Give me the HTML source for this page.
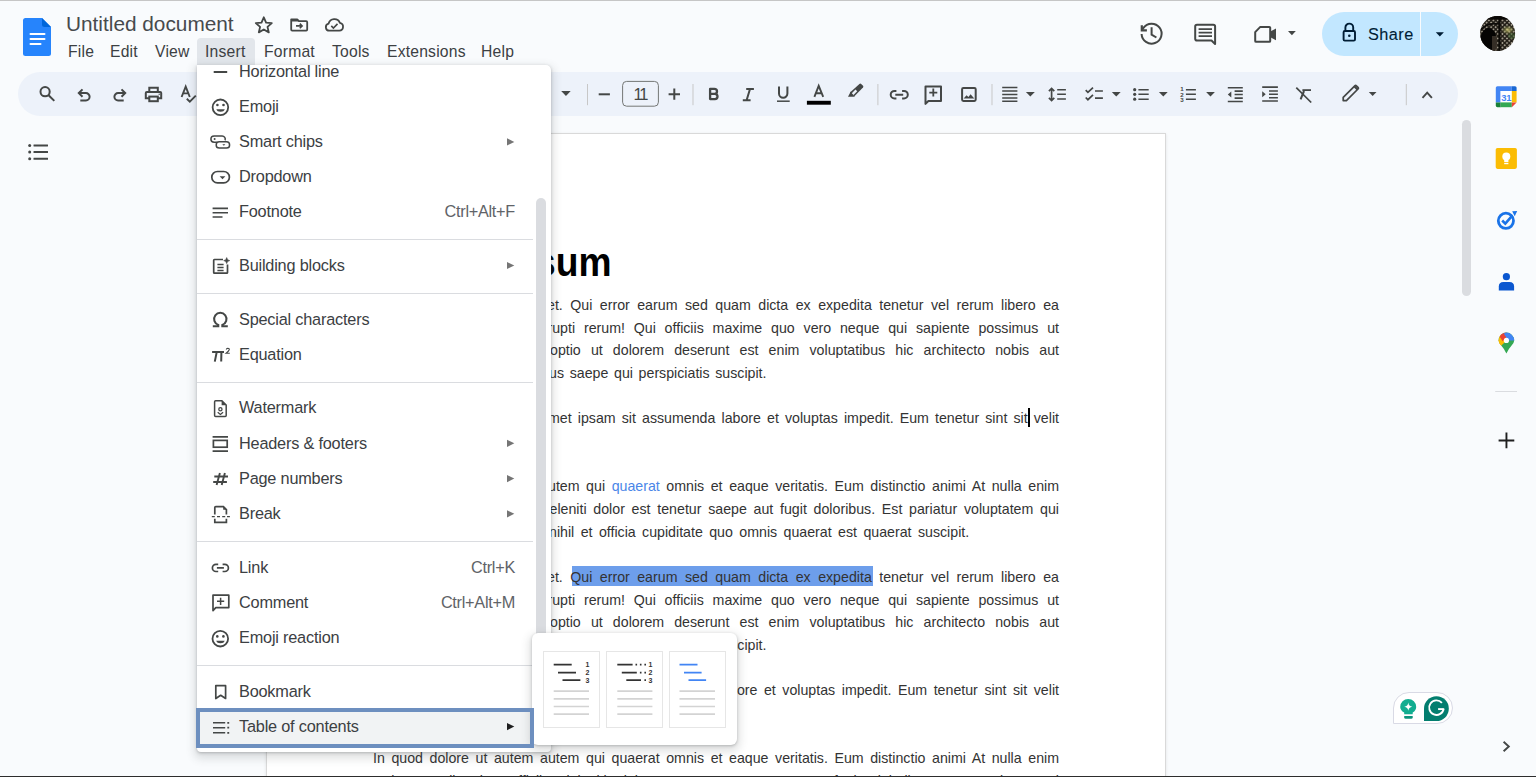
<!DOCTYPE html>
<html><head><meta charset="utf-8">
<style>
*{box-sizing:border-box;margin:0;padding:0}
html,body{width:1536px;height:777px;overflow:hidden;background:#f9fbfd;font-family:"Liberation Sans",sans-serif;position:relative}
.a{position:absolute}
.t{position:absolute;white-space:nowrap;line-height:1}
svg{position:absolute;overflow:visible}
.mb{font-size:15.7px;letter-spacing:.2px;color:#3c4043}
.doc{position:absolute;white-space:nowrap;font-size:14.2px;line-height:1;color:#333;text-align:justify;text-align-last:justify}
.mi{position:absolute;left:239px;font-size:16.3px;color:#3c4043;white-space:nowrap;line-height:1;letter-spacing:-0.2px}
.sc{position:absolute;right:1021px;font-size:16.3px;letter-spacing:-0.28px;color:#5f6368;white-space:nowrap;line-height:1;text-align:right}
</style></head><body>
<div class="a" style="left:0;top:0;width:1536px;height:1px;background:#c6c6c6"></div>
<svg style="left:23px;top:18px" width="28" height="38" viewBox="0 0 28 38">
<path d="M2.5 0H19L28 9V35.5Q28 38 25.5 38H2.5Q0 38 0 35.5V2.5Q0 0 2.5 0Z" fill="#2684fc"/>
<path d="M19 0L28 9H21.5Q19 9 19 6.5Z" fill="#0066da"/>
<rect x="6.5" y="15" width="16" height="2" rx="1" fill="#fff"/>
<rect x="6.5" y="20" width="16" height="2" rx="1" fill="#fff"/>
<rect x="6.5" y="25" width="12" height="2" rx="1" fill="#fff"/>
</svg>
<div class="t" style="left:66px;top:13.9px;font-size:20.8px;color:#474a4d">Untitled document</div>
<svg style="left:0;top:0" width="1536" height="70" fill="none" stroke="#444746" stroke-width="1.8">
<!-- star -->
<path d="M263.8 17.3L266.1 22.6L271.8 23.1L267.5 26.9L268.8 32.4L263.8 29.5L258.8 32.4L260.1 26.9L255.8 23.1L261.5 22.6Z" stroke-linejoin="round"/>
<!-- folder -->
<path d="M291.2 19.3H297.2L299 21.2H306.2Q307.2 21.2 307.2 22.2V29.6Q307.2 30.6 306.2 30.6H292.2Q291.2 30.6 291.2 29.6Z" stroke-linejoin="round"/>
<path d="M296 25.9H302M299.8 23.6L302.1 25.9L299.8 28.2" stroke-width="1.6"/>
<path d="M291.2 19.3H297.2L299.2 21.6H291.2Z" fill="#444746" stroke="none"/>
<!-- cloud -->
<path d="M329.5 30.7H339.3A4 4 0 0 0 339.9 22.8A6 6 0 0 0 328.6 23.6A3.6 3.6 0 0 0 329.5 30.7Z" stroke-linejoin="round"/>
<path d="M331.3 25.9L333.4 28L337.5 23.9" stroke-width="1.6"/>
</svg>
<div class="a" style="left:197px;top:38px;width:58px;height:27px;background:#e2e6eb;border-radius:4px 4px 0 0"></div>
<div class="t mb" style="left:68px;top:44px">File</div>
<div class="t mb" style="left:110px;top:44px">Edit</div>
<div class="t mb" style="left:155px;top:44px">View</div>
<div class="t mb" style="left:205px;top:44px">Insert</div>
<div class="t mb" style="left:264px;top:44px">Format</div>
<div class="t mb" style="left:332px;top:44px">Tools</div>
<div class="t mb" style="left:387px;top:44px">Extensions</div>
<div class="t mb" style="left:481px;top:44px">Help</div>

<!-- right header icons -->
<svg style="left:0;top:0" width="1536" height="70" fill="none" stroke="#444746" stroke-width="2">
<!-- history -->
<path d="M1141.6 34A10 10 0 1 0 1143.4 27.9L1142.4 29.6"/>
<path d="M1141.8 25.2V30.3H1146.9" stroke-width="2.2" stroke-linejoin="miter"/>
<path d="M1151.6 27.3V34.6L1156.4 37.5"/>
<!-- comments -->
<path d="M1197 24.8H1213.3Q1215.1 24.8 1215.1 26.6V44.1L1211.5 40.5H1197Q1195.2 40.5 1195.2 38.7V26.6Q1195.2 24.8 1197 24.8Z" stroke-linejoin="round"/>
<path d="M1198.6 29.1H1212M1198.6 32.6H1212M1198.6 36.1H1212" stroke-width="1.9"/>
<!-- meet -->
<path d="M1260.3 26.9H1269.3Q1270.2 26.9 1270.2 27.8V40.9Q1270.2 41.8 1269.3 41.8H1256.1Q1255.2 41.8 1255.2 40.9V32.1Z" stroke-linejoin="round"/>
<path d="M1270.3 31.6L1276 28.6V40.3L1270.3 37.2Z" fill="#444746" stroke="none"/>
<path d="M1288 31.1H1295.8L1291.9 35.2Z" fill="#444746" stroke="none"/>
</svg>
<div class="a" style="left:1321.5px;top:12px;width:136px;height:44px;background:#c2e7ff;border-radius:22px"></div>
<div class="a" style="left:1420px;top:12px;width:1px;height:44px;background:#f9fbfd"></div>
<svg style="left:0;top:0" width="1536" height="70" fill="none" stroke="#001d35" stroke-width="1.9">
<path d="M1345.4 30.6V27.5A3.9 3.9 0 0 1 1353.2 27.5V30.6"/>
<rect x="1343.6" y="31" width="11.4" height="9.6" rx="1.2"/>
<circle cx="1349.3" cy="35.8" r="1.3" fill="#001d35" stroke="none"/>
<path d="M1435.8 32.2H1443.9L1439.85 36.6Z" fill="#001d35" stroke="none"/>
</svg>
<div class="t" style="left:1368px;top:26.1px;font-size:16.3px;letter-spacing:.45px;color:#001d35;-webkit-text-stroke:.1px #001d35">Share</div>
<!-- avatar -->
<svg style="left:0;top:0" width="1536" height="70">
<defs>
<clipPath id="avc"><circle cx="1497.6" cy="33.5" r="17.5"/></clipPath>
<pattern id="mesh" x="0" y="0" width="3.2" height="3.2" patternUnits="userSpaceOnUse" patternTransform="rotate(45)">
<rect width="3.2" height="3.2" fill="#1e1a14"/>
<circle cx="1.6" cy="1.6" r="1" fill="#bdb6a6"/>
</pattern>
<radialGradient id="glow" cx="0.5" cy="0.5" r="0.5"><stop offset="0" stop-color="#d8d07a" stop-opacity=".85"/><stop offset="1" stop-color="#6f7a3a" stop-opacity="0"/></radialGradient>
</defs>
<g clip-path="url(#avc)">
<rect x="1480" y="16" width="36" height="36" fill="url(#mesh)"/>
<rect x="1480" y="16" width="36" height="36" fill="#2a2418" opacity=".2"/>
<ellipse cx="1508" cy="30" rx="7" ry="5" fill="url(#glow)"/>
<ellipse cx="1512" cy="36" rx="4" ry="3" fill="#3d5a30" opacity=".6"/>
<path d="M1480 30Q1488 22 1499 24" stroke="#0d0b08" stroke-width="1.6" fill="none"/>
<ellipse cx="1488.5" cy="42" rx="8.5" ry="14" fill="#050403"/>
<rect x="1492" y="36" width="5" height="16" fill="#4a4036" opacity=".7"/>
<rect x="1498.4" y="16" width="2.2" height="36" fill="#0c0a07"/>
<rect x="1480" y="16" width="36" height="3.5" fill="#0a0806"/>
</g>
</svg>
<div class="a" style="left:18px;top:72px;width:1439.5px;height:44px;background:#edf2fa;border-radius:22px"></div>
<svg style="left:0;top:0" width="1536" height="130" fill="none" stroke="#444746" stroke-width="2">
<!-- search -->
<circle cx="45.1" cy="91.7" r="4.6"/>
<path d="M48.6 95.2L54.3 100.9"/>
<!-- undo -->
<path d="M80.3 100.5H85.9A3.7 3.7 0 0 0 85.9 93.1H79"/>
<path d="M82.5 89.4L78.8 93.1L82.5 96.8"/>
<!-- redo -->
<path d="M123.7 100.5H118.1A3.7 3.7 0 0 1 118.1 93.1H125"/>
<path d="M121.5 89.4L125.2 93.1L121.5 96.8"/>
<!-- print -->
<path d="M149.3 91V87.8H157.8V91"/>
<path d="M149.3 98.2H145.8V93Q145.8 91.9 146.9 91.9H160.1Q161.2 91.9 161.2 93V98.2H157.8"/>
<rect x="149.3" y="96.6" width="8.5" height="4.6"/>
<circle cx="159.2" cy="94.2" r="0.7" fill="#444746" stroke="none"/>
<!-- spellcheck -->
<path d="M181.6 97L185.7 86.6L189.8 97M183 93.4H188.4" stroke-width="1.9"/>
<path d="M186.8 98.8L189.8 101.6L195.8 95.6" stroke-width="1.9"/>
<!-- dropdown arrow (font) -->
<path d="M561.2 91H570.7L565.95 95.9Z" fill="#444746" stroke="none"/>
<!-- separators -->
<path d="M587.5 84V105.2M693 84V105.2M877.9 84V105.2M992 84V105.2M1406.3 84V105.2" stroke="#c7c7c7" stroke-width="1"/>
<!-- minus -->
<path d="M598.7 94.3H609.9"/>
<!-- font size box -->
<rect x="622.6" y="81.4" width="35.8" height="24.8" rx="4" stroke="#747775" stroke-width="1"/>
<!-- plus -->
<path d="M668.6 94.2H680M674.3 88.6V99.8"/>
<!-- bold -->
<path d="M710.1 88.9H714.3Q717 88.9 717 91.5Q717 93.9 714.3 93.9H710.1ZM710.1 93.9H714.9Q717.5 93.9 717.5 96.6Q717.5 99.1 714.9 99.1H710.1Z" stroke-width="2.3" stroke-linejoin="round"/>
<!-- italic -->
<path d="M746.2 89H753.9M742.8 100.2H750.6M750 89L746.6 100.2"/>
<!-- underline -->
<path d="M779 86.5V93.6A4.2 4.2 0 0 0 787.4 93.6V86.5"/>
<path d="M777 101.2H789.7" stroke-width="1.5"/>
<!-- text color A -->
<path d="M814.4 96.9L818.7 85.9L823.2 96.9M815.9 93.3H821.6" stroke-width="1.9"/>
<rect x="806.9" y="100.8" width="23.9" height="3.9" fill="#000" stroke="none"/>
<!-- highlighter -->
<path d="M850 92.4L859.4 83.9Q860.3 83.1 861.2 83.9L863 85.7Q863.8 86.6 863 87.5L854.4 96.2Z" fill="#444746" stroke="none"/>
<path d="M850.8 91.6L848 96.8H854.8Z" fill="#444746" stroke="none"/>
<path d="M857.19 91.21L855.49 89.51L851.81 93.19L853.51 94.89Z" fill="#edf2fa" stroke="none"/>
<!-- link -->
<path d="M896.4 90.9H894.5A3.8 3.8 0 0 0 894.5 98.5H896.4M902.1 90.9H904A3.8 3.8 0 0 1 904 98.5H902.1M895.3 94.7H903.2"/>
<!-- add comment -->
<path d="M925.5 86.6H941V101H928.4L925.5 103.9Z" stroke-linejoin="round"/>
<path d="M929.3 92.6H937.3M933.3 88.6V96.6" stroke-width="1.8"/>
<!-- image -->
<rect x="962.1" y="88" width="13.6" height="12.9" rx="1.3"/>
<path d="M963.6 98.6L966.6 95.3L968.4 97.1L970.6 94.2L974.3 98.6Z" fill="#444746" stroke="none"/>
<!-- justify -->
<path d="M1002.2 87.5H1017.4M1002.2 91H1017.4M1002.2 94.4H1017.4M1002.2 97.9H1017.4M1002.2 101.3H1017.4" stroke-width="1.5"/>
<path d="M1025.9 92H1034.8L1030.35 96.6Z" fill="#444746" stroke="none"/>
<!-- line spacing -->
<path d="M1051.6 89.5V99.5M1048.9 91.2L1051.6 88.5L1054.3 91.2M1048.9 97.8L1051.6 100.5L1054.3 97.8" stroke-width="1.7"/>
<path d="M1057.2 89.7H1065.9M1057.2 94.3H1065.9M1057.2 99H1065.9" stroke-width="1.6"/>
<!-- checklist -->
<path d="M1085.7 90.2L1087.9 92.4L1093 87.6M1085.7 97.5L1087.9 99.7L1093 94.9" stroke-width="1.7"/>
<path d="M1095 91H1102.9M1095 98.1H1102.9" stroke-width="1.6"/>
<path d="M1111.8 92H1120.7L1116.25 96.6Z" fill="#444746" stroke="none"/>
<!-- bullets -->
<circle cx="1134.7" cy="89.7" r="1.6" fill="#444746" stroke="none"/>
<circle cx="1134.7" cy="94.3" r="1.6" fill="#444746" stroke="none"/>
<circle cx="1134.7" cy="99.2" r="1.6" fill="#444746" stroke="none"/>
<path d="M1138.4 89.7H1148.7M1138.4 94.3H1148.7M1138.4 99.2H1148.7" stroke-width="1.6"/>
<path d="M1158.9 92H1167.7L1163.3 96.6Z" fill="#444746" stroke="none"/>
<!-- numbered -->
<g fill="#444746" stroke="none" font-family="Liberation Sans" font-weight="bold" font-size="6.2"><text x="1180.3" y="91.4">1</text><text x="1180.3" y="96.7">2</text><text x="1180.3" y="102">3</text></g>
<path d="M1185.9 89.7H1195.9M1185.9 94.3H1195.9M1185.9 99.2H1195.9" stroke-width="1.6"/>
<path d="M1206.1 92H1214.9L1210.5 96.6Z" fill="#444746" stroke="none"/>
<!-- outdent -->
<path d="M1227.8 87.7H1242.8M1234.6 91.1H1242.8M1234.6 94.5H1242.8M1234.6 98.1H1242.8M1227.8 101.5H1242.8" stroke-width="1.6"/>
<path d="M1231.3 91.6V97.4L1227.8 94.5Z" fill="#444746" stroke="none"/>
<!-- indent -->
<path d="M1262.2 87.1H1277.9M1269 91H1277.9M1269 94.3H1277.9M1269 97.8H1277.9M1262.2 101H1277.9" stroke-width="1.6"/>
<path d="M1262.2 91.2V97.2L1265.7 94.2Z" fill="#444746" stroke="none"/>
<!-- clear formatting -->
<path d="M1302.4 90.1H1311" stroke-width="1.8"/>
<path d="M1304 91L1300.6 99.4" stroke-width="2"/>
<path d="M1296.3 87.7L1311.2 102.5" stroke-width="1.7"/>
<!-- pencil -->
<path d="M1343.2 100.6V97.4L1354.8 85.8Q1355.6 85 1356.4 85.8L1358 87.4Q1358.8 88.2 1358 89L1346.4 100.6Z" stroke-width="1.7" stroke-linejoin="round"/>
<path d="M1354.3 86.3L1357.5 89.5" stroke-width="2.2"/>
<path d="M1368.8 92H1376.5L1372.65 96Z" fill="#444746" stroke="none"/>
<!-- caret up -->
<path d="M1422.5 97.8L1427.2 92.6L1431.9 97.8" stroke-width="1.9"/>
</svg>
<div class="t" style="left:633.6px;top:85.6px;font-size:16.5px;letter-spacing:-2.4px;color:#444746">11</div>
<div class="a" style="left:266px;top:133px;width:900px;height:700px;background:#fff;border:1px solid #d9d9d9;box-shadow:0 1px 3px rgba(0,0,0,.1)"></div>
<div class="t" style="left:300px;top:242px;width:311.6px;text-align:right;font-size:40px;font-weight:bold;color:#000;transform:scaleX(0.93);transform-origin:right top">Lorem ipsum</div>
<div class="a" style="left:571.6px;top:566.2px;width:301.6px;height:19.4px;background:#6d9eeb"></div>
<div class="doc" style="left:547px;top:298.08px;width:512px">et. Qui error earum sed quam dicta ex expedita tenetur vel rerum libero ea</div>
<div class="doc" style="left:547.5px;top:320.73px;width:511.5px">rupti rerum! Qui officiis maxime quo vero neque qui sapiente possimus ut</div>
<div class="doc" style="left:550px;top:343.38px;width:509px">optio ut dolorem deserunt est enim voluptatibus hic architecto nobis aut</div>
<div class="doc" style="left:549px;top:366.03px;width:217.5px">us saepe qui perspiciatis suscipit.</div>
<div class="doc" style="left:548px;top:411.33px;width:511px">met ipsam sit assumenda labore et voluptas impedit. Eum tenetur sint sit velit</div>
<div class="doc" style="left:548px;top:479.28px;width:511px">utem qui <span style="color:#4a86e8">quaerat</span> omnis et eaque veritatis. Eum distinctio animi At nulla enim</div>
<div class="doc" style="left:549.5px;top:501.93px;width:509.5px">eleniti dolor est tenetur saepe aut fugit doloribus. Est pariatur voluptatem qui</div>
<div class="doc" style="left:549px;top:524.58px;width:420.2px">nihil et officia cupiditate quo omnis quaerat est quaerat suscipit.</div>
<div class="doc" style="left:547px;top:569.88px;width:512px">et. Qui error earum sed quam dicta ex expedita tenetur vel rerum libero ea</div>
<div class="doc" style="left:547.5px;top:592.53px;width:511.5px">rupti rerum! Qui officiis maxime quo vero neque qui sapiente possimus ut</div>
<div class="doc" style="left:550px;top:615.18px;width:509px">optio ut dolorem deserunt est enim voluptatibus hic architecto nobis aut</div>
<div class="doc" style="left:660px;top:637.83px;width:106.5px;text-align:right;text-align-last:right">suscipit.</div>
<div class="doc" style="left:729px;top:683.13px;width:330px">bore et voluptas impedit. Eum tenetur sint sit velit</div>
<div class="doc" style="left:373px;top:751.08px;width:686px">In quod dolore ut autem autem qui quaerat omnis et eaque veritatis. Eum distinctio animi At nulla enim</div>
<div class="doc" style="left:373px;top:773.73px;width:686px">Dolores velit eius officiis deleniti dolor est tenetur saepe aut fugit doloribus. Est pariatur qui</div>
<div class="a" style="left:1027.9px;top:407.8px;width:2px;height:19.7px;background:#000"></div>
<svg style="left:0;top:0" width="70" height="170" fill="#444746">
<circle cx="29.7" cy="145.4" r="1.5"/><circle cx="29.7" cy="152" r="1.5"/><circle cx="29.7" cy="158.7" r="1.5"/>
<rect x="33.5" y="144.4" width="14.5" height="2" rx=".3"/><rect x="33.5" y="151" width="14.5" height="2" rx=".3"/><rect x="33.5" y="157.7" width="14.5" height="2" rx=".3"/>
</svg>
<div class="a" style="left:1461.7px;top:120px;width:9.3px;height:175.5px;background:#dadce0;border-radius:5px"></div>
<svg style="left:0;top:0" width="1536" height="777">
<!-- calendar -->
<g>
<path d="M1495.8 102.4V87.8Q1495.8 86.2 1497.4 86.2H1511.8V91H1500.6V102.4Z" fill="#4285f4"/>
<rect x="1500.6" y="91" width="11.2" height="11.4" fill="#fff"/>
<path d="M1511.8 91H1516.6V102.4H1511.8Z" fill="#fbbc04"/>
<path d="M1500.6 102.4H1511.8V107.2H1500.6Z" fill="#34a853"/>
<path d="M1495.8 102.4H1500.6V107.2H1497.4Q1495.8 107.2 1495.8 105.6Z" fill="#188038"/>
<path d="M1511.8 102.4H1516.6L1511.8 107.2Z" fill="#ea4335"/>
<path d="M1511.8 86.2H1515Q1516.6 86.2 1516.6 87.8V91H1511.8Z" fill="#1967d2"/>
<text x="1506.2" y="100.8" font-family="Liberation Sans" font-size="9.4" font-weight="bold" fill="#4285f4" text-anchor="middle" letter-spacing="-.3">31</text>
</g>
<!-- keep -->
<rect x="1495.7" y="147.9" width="21.2" height="21" rx="1.8" fill="#fbbc04"/>
<circle cx="1506.3" cy="156.6" r="4" fill="#fff"/>
<rect x="1504.2" y="160" width="4.2" height="2.2" fill="#fff"/>
<rect x="1504.2" y="163" width="4.2" height="1.2" fill="#fff"/>
<!-- tasks -->
<circle cx="1505.9" cy="220.8" r="7.6" fill="none" stroke="#1a73e8" stroke-width="2.8"/>
<path d="M1502.2 220.5L1505.3 223.6L1512.5 215.4" fill="none" stroke="#1a73e8" stroke-width="2.6"/>
<path d="M1512.2 211.3L1517.2 211.1L1514.7 216.3Z" fill="#1a73e8"/>
<!-- contacts -->
<circle cx="1506.4" cy="276.7" r="3.6" fill="#0b57d0"/>
<path d="M1498.8 290.4V286.6Q1498.8 282 1503.4 282H1509.5Q1514.1 282 1514.1 286.6V290.4Z" fill="#0b57d0"/>
<!-- maps -->
<path d="M1506.4 353.4Q1504.6 349.2 1501.2 345.4Q1498.6 342.4 1498.6 340.4A7.8 7.8 0 0 1 1514.2 340.4Q1514.2 342.4 1511.6 345.4Q1508.2 349.2 1506.4 353.4Z" fill="#34a853"/>
<path d="M1498.6 340.4A7.8 7.8 0 0 1 1501.4 334.4L1506.4 340.4L1501.2 345.4Q1498.6 342.4 1498.6 340.4Z" fill="#fbbc04"/>
<path d="M1501.4 334.4A7.8 7.8 0 0 1 1506.4 332.6L1503.2 336.5Z" fill="#ea4335"/>
<path d="M1506.4 332.6A7.8 7.8 0 0 1 1514.2 340.4L1506.4 340.4L1501.4 334.4Z" fill="#4285f4"/>
<path d="M1501.4 334.4L1506.4 340.4L1501.2 345.4Q1498.6 342.4 1498.6 340.4Z" fill="#fbbc04"/>
<path d="M1499.6 336.4A7.8 7.8 0 0 1 1503.6 333.2L1506.4 337.8L1502.6 341.2Z" fill="#ea4335"/>
<circle cx="1506.4" cy="340.4" r="2.6" fill="#fff"/>
<!-- divider -->
<rect x="1495.2" y="391" width="21.8" height="1" fill="#dadce0"/>
<!-- plus -->
<path d="M1498.6 440.5H1514.3M1506.45 432.6V448.3" stroke="#1f1f1f" stroke-width="1.9"/>
<!-- chevron -->
<path d="M1503.6 741.8L1508.8 746.5L1503.6 751.2" fill="none" stroke="#444746" stroke-width="1.9"/>
</svg>
<!-- grammarly -->
<div class="a" style="left:1392.5px;top:692.2px;width:60.5px;height:32px;background:#fff;border:1px solid #d9dae5;border-radius:16px 16px 16px 0"></div>
<svg style="left:0;top:0" width="1536" height="777">
<path d="M1404.2 714.3V712.6Q1400.2 710.2 1400.2 706.9A8 8 0 0 1 1416.2 706.9Q1416.2 710.2 1412.7 712.6V714.3Z" fill="#12ad90"/>
<path d="M1404.2 715.9H1412.7V717.2Q1412.7 718.7 1411.2 718.7H1405.7Q1404.2 718.7 1404.2 717.2Z" fill="#0b937b"/>
<path d="M1408.3 702.6Q1408.7 706.3 1412.3 706.7Q1408.7 707.1 1408.3 710.8Q1407.9 707.1 1404.3 706.7Q1407.9 706.3 1408.3 702.6Z" fill="#fff"/>
<path d="M1424 708.5A12.4 12.4 0 1 1 1436.4 721H1424Z" fill="#037e6f"/>
<path d="M1441.9 702.8A7.3 7.3 0 1 0 1443.7 708.6" fill="none" stroke="#fff" stroke-width="1.9"/>
<path d="M1438.1 709.1H1443.8" stroke="#fff" stroke-width="1.9"/>
</svg>
<div class="a" style="left:0;top:775.5px;width:1536px;height:1.5px;background:#2d2d2d"></div>
<div class="a" style="left:197px;top:64.6px;width:353.5px;height:687px;background:#fff;border-radius:0 5px 4px 4px;box-shadow:0 4px 8px 3px rgba(60,64,67,.15),0 1px 3px rgba(60,64,67,.3)"></div>
<div class="a" style="left:196.4px;top:708px;width:337.6px;height:40px;background:#f1f3f4"></div>
<div class="a" style="left:536.3px;top:197.7px;width:9.5px;height:460px;background:#dadce0;border-radius:5px"></div>
<div class="a" style="left:197px;top:238.9px;width:336px;height:1px;background:#dadce0"></div>
<div class="a" style="left:197px;top:292.7px;width:336px;height:1px;background:#dadce0"></div>
<div class="a" style="left:197px;top:381.7px;width:336px;height:1px;background:#dadce0"></div>
<div class="a" style="left:197px;top:540.8px;width:336px;height:1px;background:#dadce0"></div>
<div class="a" style="left:197px;top:664.6px;width:336px;height:1px;background:#dadce0"></div>
<div class="mi" style="top:63.0px">Horizontal line</div>
<div class="mi" style="top:98.0px">Emoji</div>
<div class="mi" style="top:133.3px">Smart chips</div>
<div class="mi" style="top:168.2px">Dropdown</div>
<div class="mi" style="top:203.4px">Footnote</div>
<div class="sc" style="top:203.4px">Ctrl+Alt+F</div>
<div class="mi" style="top:256.9px">Building blocks</div>
<div class="mi" style="top:311.0px">Special characters</div>
<div class="mi" style="top:346.0px">Equation</div>
<div class="mi" style="top:399.3px">Watermark</div>
<div class="mi" style="top:434.7px">Headers &amp; footers</div>
<div class="mi" style="top:470.0px">Page numbers</div>
<div class="mi" style="top:505.2px">Break</div>
<div class="mi" style="top:559.1px">Link</div>
<div class="sc" style="top:559.1px">Ctrl+K</div>
<div class="mi" style="top:594.1px">Comment</div>
<div class="sc" style="top:594.1px">Ctrl+Alt+M</div>
<div class="mi" style="top:629.0px">Emoji reaction</div>
<div class="mi" style="top:683.1px">Bookmark</div>
<div class="mi" style="top:718.0px">Table of contents</div>
<svg style="left:0;top:0" width="560" height="777" fill="#757575"><path d="M507 138.3L514.3 141.9L507 145.5Z"/><path d="M507 261.9L514.3 265.5L507 269.1Z"/><path d="M507 439.7L514.3 443.3L507 446.9Z"/><path d="M507 475.0L514.3 478.6L507 482.2Z"/><path d="M507 510.2L514.3 513.8L507 517.4Z"/><path d="M507 723.0L514.3 726.6L507 730.2Z" fill="#1f1f1f"/></svg>
<svg style="left:0;top:0" width="560" height="777" fill="none" stroke="#444746" stroke-width="1.8">
<!-- horizontal line -->
<path d="M213.7 72H227.2" stroke-width="2"/>
<!-- emoji -->
<circle cx="220.4" cy="107.3" r="7.8"/>
<circle cx="217.4" cy="105" r="1.3" fill="#444746" stroke="none"/>
<circle cx="223.5" cy="105" r="1.3" fill="#444746" stroke="none"/>
<path d="M216.3 109.3H224.8Q224 111.8 220.55 111.8Q217.1 111.8 216.3 109.3Z" fill="#444746" stroke="none"/>
<!-- smart chips -->
<path d="M217.3 142.3H214.1A3.2 3.2 0 0 1 214.1 135.9H222A3.2 3.2 0 0 1 225 140.4" stroke-width="1.5"/>
<circle cx="214.6" cy="139.1" r="1" fill="#444746" stroke="none"/>
<rect x="216.2" y="141.8" width="13.4" height="6.2" rx="3.1" stroke-width="1.5"/>
<path d="M222.3 144.2H225.4L223.85 145.8Z" fill="#444746" stroke="none"/>
<!-- dropdown -->
<rect x="211.8" y="171.5" width="17.6" height="11.4" rx="5.7" stroke-width="1.7"/>
<path d="M219.6 176.2H225.4L222.5 179.2Z" fill="#444746" stroke="none"/>
<!-- footnote -->
<path d="M212.6 208.4H228M212.6 212.8H228M212.6 217H222.5" stroke-width="1.6"/>
<!-- building blocks -->
<path d="M223 259.5H214.4Q213.7 259.5 213.7 260.2V272.5Q213.7 273.2 214.4 273.2H226.8Q227.5 273.2 227.5 272.5V264.5" stroke-width="1.7"/>
<path d="M217.4 264.4H223.6M217.4 267.5H223.6M217.4 270.5H223.6" stroke-width="1.5"/>
<path d="M226.7 257.6Q227 260.3 229.7 260.6Q227 260.9 226.7 263.6Q226.4 260.9 223.7 260.6Q226.4 260.3 226.7 257.6Z" fill="#444746" stroke="#444746" stroke-width=".6"/>
<!-- omega -->
<path d="M212.8 326.3H218.3V324.9A6.2 6.2 0 1 1 222.3 324.9V326.3H227.8" stroke-width="2"/>
<!-- pi -->
<path d="M212.1 352H224" stroke-width="2"/>
<path d="M216.6 352.6L214.8 361.6M221.4 352.6L221.2 361.6" stroke-width="2"/>
<path d="M226.2 349.4Q226.8 348.3 227.9 348.3Q229.4 348.4 229.3 349.6Q229.1 350.8 226.1 353.2H229.8" stroke-width="1.1"/>
<!-- watermark -->
<path d="M214.6 401.7Q214.6 400.7 215.6 400.7H221.9L226.2 405V415.4Q226.2 416.4 225.2 416.4H215.6Q214.6 416.4 214.6 415.4Z" stroke-width="1.5"/>
<path d="M221.6 400.7L226.2 405.2H221.6Z" fill="#444746" stroke="none"/>
<circle cx="220.4" cy="409.2" r="1.6" stroke-width="1.3"/>
<path d="M217.7 412.2L220.4 414.4L223.1 412.2" stroke-width="1.3"/>
<!-- headers & footers -->
<path d="M212.6 436.9H228M212.6 451.1H228" stroke-width="1.7"/>
<rect x="213.4" y="440.4" width="13.8" height="6.8" stroke-width="1.7"/>
<!-- page numbers -->
<path d="M214.3 476.5H228M213.2 482H226.9M219.9 472.9L216.6 485.1M224.9 472.9L221.7 485.1" stroke-width="1.9"/>
<!-- break -->
<path d="M214.8 514.6V507.6Q214.8 506.6 215.8 506.6H223.4L226.4 509.6V514.6" stroke-width="1.7"/>
<path d="M223.2 506.6V509.8H226.4Z" fill="#444746" stroke="none"/>
<path d="M211.8 516.6H214.8M217 516.6H220M222.2 516.6H225.2M227 516.6H229.9" stroke-width="1.4"/>
<path d="M214.8 518.8V522.4H226.4V518.8" stroke-width="1.7"/>
<!-- link -->
<path d="M218.2 564.3H216A3.6 3.6 0 0 0 216 571.5H218.2M222.6 564.3H224.8A3.6 3.6 0 0 1 224.8 571.5H222.6M216.9 567.9H223.9" stroke-width="1.7"/>
<!-- comment -->
<path d="M213 595.2H228.8V607.6H215.8L213 610.6Z" stroke-width="1.7" stroke-linejoin="round"/>
<path d="M217 601.3H224.2M220.6 597.7V604.9" stroke-width="1.5"/>
<!-- emoji reaction -->
<circle cx="220.3" cy="638.7" r="7.8"/>
<circle cx="217.3" cy="636.4" r="1.3" fill="#444746" stroke="none"/>
<circle cx="223.4" cy="636.4" r="1.3" fill="#444746" stroke="none"/>
<path d="M216.2 640.7H224.7Q223.9 643.2 220.45 643.2Q217 643.2 216.2 640.7Z" fill="#444746" stroke="none"/>
<!-- bookmark -->
<path d="M215.8 698.5V685.7H225.6V698.5L220.7 695.3Z" stroke-width="1.7" stroke-linejoin="round"/>
<!-- toc -->
<path d="M213 722.8H225.2M213 727.7H225.2M213 732.8H225.2" stroke-width="1.6"/>
<path d="M228.25 721.9V723.7M228.25 726.8V728.6M228.25 731.9V733.7" stroke-width="1.9"/>
</svg>
<div class="a" style="left:532.3px;top:633.3px;width:204.7px;height:111.4px;background:#fff;border-radius:6px;box-shadow:0 4px 8px 3px rgba(60,64,67,.15),0 1px 3px rgba(60,64,67,.3)"></div>
<div class="a" style="left:543.4px;top:650.6px;width:56.8px;height:77px;border:1px solid #e6e6e6;background:#fff"></div>
<div class="a" style="left:606.1px;top:650.6px;width:56.6px;height:77px;border:1px solid #e6e6e6;background:#fff"></div>
<div class="a" style="left:669.2px;top:650.6px;width:56.6px;height:77px;border:1px solid #e6e6e6;background:#fff"></div>
<svg style="left:0;top:0" width="760" height="777" fill="none" stroke-width="1.8">
<g stroke="#333">
<path d="M553.7 664.7H571.7M558 672.6H576M562.5 680.2H580.4"/>
<path d="M617.3 664.7H632.6M621.8 672.6H636.8M626.3 680.2H641"/>
<path d="M636.3 663.8V665.6M640.7 663.8V665.6M645.2 663.8V665.6M640.7 671.7V673.5M645.2 671.7V673.5M645.2 679.3V681.1" stroke-width="1.6"/>
</g>
<g fill="#333" stroke="none" font-family="Liberation Sans" font-size="7" font-weight="bold">
<text x="585.4" y="667.3">1</text><text x="585.4" y="675.2">2</text><text x="585.4" y="682.8">3</text>
<text x="648.6" y="667.3">1</text><text x="648.6" y="675.2">2</text><text x="648.6" y="682.8">3</text>
</g>
<path d="M679.5 664.7H697.5M684 672.6H701.6M688.5 680.2H706.1" stroke="#4285f4"/>
<g stroke="#d3d3d3" stroke-width="1.7">
<path d="M553.7 691.2H589M553.7 698.9H589M553.7 706.5H589M553.7 714.2H589"/>
<path d="M617.3 691.2H652.4M617.3 698.9H652.4M617.3 706.5H652.4M617.3 714.2H652.4"/>
<path d="M679.5 691.2H715M679.5 698.9H715M679.5 706.5H715M679.5 714.2H715"/>
</g>
</svg>
<div class="a" id="focusring" style="left:196.4px;top:708px;width:337.6px;height:40px;border:4px solid #6d8fbf"></div>
</body></html>
